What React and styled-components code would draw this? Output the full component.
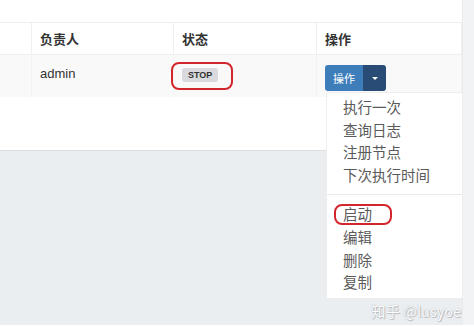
import React from "react";
import styled, { createGlobalStyle } from "styled-components";

const GlobalStyle = createGlobalStyle`
  body {
    margin: 0;
    background: #ffffff;
    font-family: "Liberation Sans", "Noto Sans CJK SC", sans-serif;
    color: #333;
  }
`;

const Page = styled.div`
  display: flex;
  width: 474px;
  height: 327px;
  overflow: hidden;
`;

const Main = styled.div`
  width: 463px;
  display: flex;
  flex-direction: column;
`;

const SideStrip = styled.div`
  width: 11px;
  height: 325px;
  background: #f1f3f5;
  border-left: 1px solid #e8eaec;
`;

const Panel = styled.section`
  height: 151px;
  padding-top: 22px;
  box-sizing: border-box;
  background: #fff;
  border-bottom: 1px solid #dcdfe2;
`;

const Table = styled.div`
  display: grid;
  grid-template-columns: 32px 142px 143px 145px;
  width: 462px;
`;

const HeadCell = styled.div`
  height: 32px;
  box-sizing: border-box;
  padding: 0 8px;
  display: flex;
  align-items: center;
  border-top: 1px solid #efefef;
  border-right: 1px solid #efefef;
  font-family: "Noto Sans CJK SC", sans-serif;
  font-size: 13px;
  font-weight: 700;
  color: #333;
`;

const BodyCell = styled.div`
  position: relative;
  height: 43px;
  box-sizing: border-box;
  padding: 9px 8px 0;
  background: #f9f9f9;
  border-top: 1px solid #efefef;
  border-right: 1px solid #f3f3f3;
  font-size: 13px;
  line-height: 20px;
  color: #333;
`;

const Label = styled.span`
  position: relative;
  display: inline-block;
  margin-top: 4px;
  padding: 0 6px;
  height: 14px;
  line-height: 14px;
  border-radius: 3px;
  background: #d8dadd;
  color: #333;
  font-size: 9px;
  font-weight: 700;
`;

const Ring = styled.span`
  position: absolute;
  left: ${(p) => p.$left}px;
  top: ${(p) => p.$top}px;
  width: ${(p) => p.$w}px;
  height: ${(p) => p.$h}px;
  border: 2px solid #d3262c;
  border-radius: 8px;
  box-sizing: border-box;
  pointer-events: none;
`;

const BtnGroup = styled.div`
  position: relative;
  display: inline-flex;
  margin-top: 1px;
`;

const MainBtn = styled.button`
  width: 38px;
  height: 26px;
  border: none;
  border-radius: 3px 0 0 3px;
  background: #3d7eba;
  color: #fff;
  font-family: "Noto Sans CJK SC", sans-serif;
  font-size: 11px;
  padding: 0;
`;

const CaretBtn = styled.button`
  width: 23px;
  height: 26px;
  border: none;
  border-radius: 0 3px 3px 0;
  background: #284c75;
  display: flex;
  align-items: center;
  justify-content: center;
  padding: 0;

  &::after {
    content: "";
    border-left: 3px solid transparent;
    border-right: 3px solid transparent;
    border-top: 3px solid #fff;
  }
`;

const Menu = styled.ul`
  position: absolute;
  top: 27px;
  left: 1px;
  z-index: 5;
  width: 137px;
  margin: 0;
  padding: 3px 0 4px;
  list-style: none;
  background: #fff;
  border: 1px solid #eceef0;
  border-radius: 2px;
  box-sizing: border-box;
`;

const MenuItem = styled.li`
  position: relative;
  height: 22.6px;
  line-height: 22.6px;
  padding-left: 16px;
  font-family: "Noto Sans CJK SC", sans-serif;
  font-size: 14.5px;
  color: #5a5a5a;
  white-space: nowrap;
`;

const Divider = styled.li`
  height: 1px;
  margin: 8px 0 8px;
  background: #eaeaea;
`;

const Ground = styled.div`
  height: 174px;
  background: #ebeef1;
  display: flex;
  justify-content: flex-end;
  align-items: flex-end;
  padding: 0 1px 4px 0;
  box-sizing: border-box;
`;

const Watermark = styled.span`
  font-family: "Noto Sans CJK SC", sans-serif;
  font-size: 14.5px;
  color: #fdfdfe;
  text-shadow: 0 0 1px #9ea3a8, 1px 1px 1px #b8bcc0;
`;

const firstItems = ["执行一次", "查询日志", "注册节点", "下次执行时间"];
const secondItems = ["启动", "编辑", "删除", "复制"];

export default function App() {
  return (
    <Page>
      <GlobalStyle />
      <Main>
        <Panel>
          <Table>
            <HeadCell />
            <HeadCell>负责人</HeadCell>
            <HeadCell>状态</HeadCell>
            <HeadCell>操作</HeadCell>
            <BodyCell />
            <BodyCell>admin</BodyCell>
            <BodyCell>
              <Label>
                STOP
                <Ring $left={-11} $top={-6} $w={62} $h={28} />
              </Label>
            </BodyCell>
            <BodyCell>
              <BtnGroup>
                <MainBtn>操作</MainBtn>
                <CaretBtn aria-label="更多" />
                <Menu>
                  {firstItems.map((t) => (
                    <MenuItem key={t}>{t}</MenuItem>
                  ))}
                  <Divider />
                  {secondItems.map((t, i) => (
                    <MenuItem key={t}>
                      {t}
                      {i === 0 && <Ring $left={7} $top={1} $w={58} $h={21} />}
                    </MenuItem>
                  ))}
                </Menu>
              </BtnGroup>
            </BodyCell>
          </Table>
        </Panel>
        <Ground>
          <Watermark>知乎 @lusyoe</Watermark>
        </Ground>
      </Main>
      <SideStrip />
    </Page>
  );
}
